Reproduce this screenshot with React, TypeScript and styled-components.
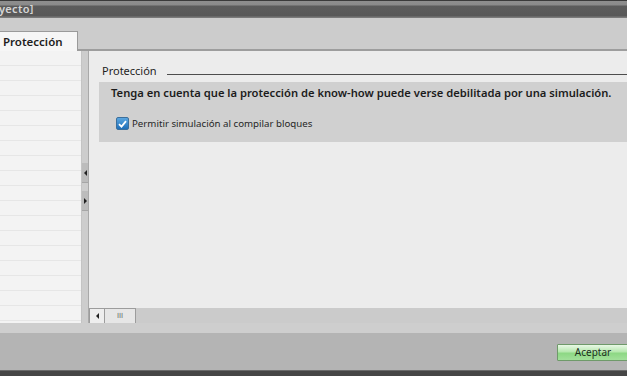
import { FC } from 'react'
import styled, { createGlobalStyle } from 'styled-components'

const GlobalStyle = createGlobalStyle`
  html, body {
    margin: 0;
    padding: 0;
    background: #cccccc;
  }
  body {
    font-family: 'Noto Sans', 'Open Sans', 'DejaVu Sans', sans-serif;
  }
`

const App: FC = () => {
  return (
    <>
      <GlobalStyle />
      <Window>
        <TitleBar>yecto]</TitleBar>
        <TabStrip>
          <Tab>Protección</Tab>
        </TabStrip>
        <Body>
          <NavPanel />
          <Splitter>
            <SplitButton $top={112}>
              <Arrow $dir="left" />
            </SplitButton>
            <SplitButton $top={140}>
              <Arrow $dir="right" />
            </SplitButton>
          </Splitter>
          <RightPane>
            <Content>
              <SectionHeader>
                <SectionTitle>Protección</SectionTitle>
                <SectionRule />
              </SectionHeader>
              <InfoBox>
                <InfoText>Tenga en cuenta que la protección de know-how puede verse debilitada por una simulación.</InfoText>
                <CheckRow>
                  <CheckBox>
                    <svg width="9" height="8" viewBox="0 0 9 8">
                      <path d="M1 4.2 L3.5 6.6 L8 1.2" fill="none" stroke="#ffffff" strokeWidth="1.8" />
                    </svg>
                  </CheckBox>
                  <CheckLabel>Permitir simulación al compilar bloques</CheckLabel>
                </CheckRow>
              </InfoBox>
            </Content>
            <HScroll>
              <ScrollButton>
                <Arrow $dir="left" />
              </ScrollButton>
              <ScrollThumb>III</ScrollThumb>
            </HScroll>
          </RightPane>
        </Body>
        <Footer>
          <AcceptButton>Aceptar</AcceptButton>
        </Footer>
        <BottomBar />
      </Window>
    </>
  )
}

export default App

const Window = styled.div`
  width: 627px;
  height: 376px;
  display: flex;
  flex-direction: column;
  overflow: hidden;
  background: #cccccc;
`

const TitleBar = styled.div`
  height: 17px;
  flex: none;
  border-top: 1px solid #3a3a3a;
  background: linear-gradient(to bottom, #8e8e8e 0px, #8a8a8a 4px, #5c5c5c 5px, #585858 15px, #7a7a7a 16px);
  color: #d6d6d6;
  font-size: 11px;
  font-weight: 600;
  line-height: 15px;
  margin-left: -1px;
  letter-spacing: 0.3px;
`

const TabStrip = styled.div`
  height: 31px;
  flex: none;
  display: flex;
  align-items: flex-end;
  background: #cccccc;
  border-bottom: 2px solid #9d9d9d;
`

const Tab = styled.div`
  width: 74px;
  height: 19px;
  margin-bottom: -2px;
  background: #f6f6f6;
  border: 1px solid #9a9a9a;
  border-left: none;
  border-bottom: none;
  padding-left: 3px;
  box-sizing: content-box;
  font-size: 11.5px;
  font-weight: 600;
  color: #1e1e1e;
  line-height: 19px;
`

const Body = styled.div`
  flex: 1;
  display: flex;
  min-height: 0;
`

const NavPanel = styled.div`
  width: 81px;
  flex: none;
  border-right: 1px solid #c4c4c4;
  background: repeating-linear-gradient(to bottom, #f3f3f3 0px, #f3f3f3 14px, #e6e6e6 14px, #e6e6e6 15px);
`

const Splitter = styled.div`
  width: 6px;
  flex: none;
  position: relative;
  background: #cdcdcd;
  border-right: 1px solid #a9a9a9;
`

const SplitButton = styled.div<{ $top: number }>`
  position: absolute;
  left: 0;
  top: ${props => props.$top}px;
  width: 6px;
  height: 19px;
  background: #bcbcbc;
  border-bottom: 1px solid #a6a6a6;
  display: flex;
  align-items: center;
  justify-content: center;
`

const Arrow = styled.span<{ $dir: 'left' | 'right' }>`
  width: 0;
  height: 0;
  border-top: 3px solid transparent;
  border-bottom: 3px solid transparent;
  ${props => (props.$dir === 'left' ? 'border-right: 3px solid #222;' : 'border-left: 3px solid #222;')}
`

const RightPane = styled.div`
  flex: 1;
  display: flex;
  flex-direction: column;
  background: #ececec;
  min-width: 0;
`

const Content = styled.div`
  flex: 1;
  padding-top: 12px;
  padding-left: 10px;
`

const SectionHeader = styled.div`
  display: flex;
  align-items: center;
  height: 15px;
  padding-left: 3px;
`

const SectionTitle = styled.span`
  font-size: 11px;
  color: #1e1e1e;
  margin-right: 10px;
`

const SectionRule = styled.div`
  flex: 1;
  height: 1px;
  margin-top: 7px;
  background: #4d4d4d;
`

const InfoBox = styled.div`
  margin-top: 4px;
  height: 60px;
  box-sizing: border-box;
  background: #d0d0d0;
  padding: 3px 0 0 12px;
`

const InfoText = styled.div`
  font-size: 11.2px;
  font-weight: 600;
  color: #1c1c1c;
  line-height: 16px;
  white-space: nowrap;
`

const CheckRow = styled.div`
  display: flex;
  align-items: center;
  margin-top: 16px;
  padding-left: 5px;
`

const CheckBox = styled.span`
  width: 11px;
  height: 11px;
  border: 1px solid #3b6f9c;
  border-radius: 2px;
  background: linear-gradient(to bottom, #5aa6e0, #1f6fb8);
  display: flex;
  align-items: center;
  justify-content: center;
  margin-right: 3px;
`

const CheckLabel = styled.span`
  font-size: 9.7px;
  color: #262626;
`

const HScroll = styled.div`
  height: 15px;
  flex: none;
  display: flex;
  background: #cbcbcb;
`

const ScrollButton = styled.div`
  width: 14px;
  height: 14px;
  border: 1px solid #9c9c9c;
  border-right: none;
  background: #eeeeee;
  display: flex;
  align-items: center;
  justify-content: center;
`

const ScrollThumb = styled.div`
  width: 30px;
  height: 14px;
  border: 1px solid #9c9c9c;
  background: #e6e6e6;
  font-size: 7px;
  color: #666;
  letter-spacing: 0;
  display: flex;
  align-items: center;
  justify-content: center;
  font-family: 'DejaVu Sans', sans-serif;
`

const Footer = styled.div`
  height: 47px;
  flex: none;
  box-sizing: border-box;
  background: linear-gradient(to bottom, #cecece 0px, #cecece 10px, #b4b4b4 10px);
  display: flex;
  justify-content: flex-end;
  align-items: flex-start;
  padding-top: 21px;
`

const AcceptButton = styled.div`
  width: 70px;
  height: 15px;
  margin-right: -2px;
  border: 1px solid #6f9a6a;
  border-radius: 1px;
  background: linear-gradient(to bottom, #e9f8e6 0%, #b6e8ae 45%, #8dd884 55%, #a2e09a 100%);
  font-size: 10px;
  line-height: 15px;
  text-align: center;
  color: #1c2e1c;
`

const BottomBar = styled.div`
  height: 5px;
  flex: none;
  border-top: 1px solid #6a6a6a;
  background: #464646;
`
